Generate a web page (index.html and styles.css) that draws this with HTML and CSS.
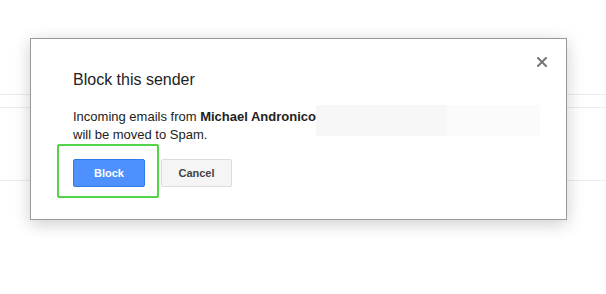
FILE: index.html
```html
<!DOCTYPE html>
<html lang="en">

<head>
    <meta charset="UTF-8">
    <title>Block this sender</title>
    <link rel="stylesheet" href="styles.css">
</head>

<body>
    <div class="list">
        <div class="row row-thin"></div>
        <div class="row row-tall"></div>
    </div>

    <div class="dialog">
        <span class="close" title="Close">
            <svg width="10" height="10" viewBox="0 0 10 10">
                <path d="M1 1L9 9M9 1L1 9" stroke="#777" stroke-width="2" stroke-linecap="square" />
            </svg>
        </span>
        <div class="title">Block this sender</div>
        <div class="message">
            Incoming emails from <b>Michael Andronico</b><br>
            will be moved to Spam.
        </div>
        <span class="redacted"></span>
        <div class="buttons">
            <span class="highlight">
                <button class="btn btn-primary">Block</button>
            </span>
            <button class="btn">Cancel</button>
        </div>
    </div>
</body>

</html>
```

FILE: styles.css
```css
body {
    margin: 0;
    background: #fff;
    font-family: Arial, "Liberation Sans", sans-serif;
    color: #222;
}

.list {
    padding-top: 94px;
}

.row {
    border-top: 1px solid #ececec;
}

.row-thin {
    height: 12px;
}

.row-tall {
    height: 72px;
    border-bottom: 1px solid #ececec;
}

.dialog {
    position: absolute;
    left: 30px;
    top: 38px;
    width: 451px;
    height: 119px;
    padding: 31px 42px 30px 42px;
    background: #fff;
    border: 1px solid #9a9a9a;
    box-shadow: 0 4px 16px rgba(0, 0, 0, 0.2);
}

.close {
    position: absolute;
    right: 19px;
    top: 18px;
    width: 10px;
    height: 10px;
    line-height: 0;
}

.title {
    font-size: 16px;
    line-height: 20px;
    color: #222;
}

.message {
    margin-top: 18px;
    font-size: 13px;
    line-height: 18px;
    color: #222;
}

.redacted {
    position: absolute;
    left: 285px;
    top: 66px;
    width: 224px;
    height: 31px;
    background: linear-gradient(to right, #f7f7f7 0, #f7f7f7 131px, #fbfbfb 131px);
}

.buttons {
    display: flex;
    gap: 16px;
    margin-top: 15px;
}

.highlight {
    position: relative;
    display: flex;
}

.highlight::before {
    content: "";
    position: absolute;
    left: -16px;
    top: -15px;
    right: -14px;
    bottom: -11px;
    border: 2px solid #52d348;
    border-radius: 2px;
}

.btn {
    height: 28px;
    width: 71px;
    margin: 0;
    padding: 0 8px;
    font-family: Arial, "Liberation Sans", sans-serif;
    font-size: 11px;
    font-weight: bold;
    color: #444;
    background: #f5f5f5;
    border: 1px solid #dcdcdc;
    border-radius: 2px;
}

.btn-primary {
    width: 72px;
    color: #fff;
    background: #4d90fe;
    border-color: #3079ed;
}
```
